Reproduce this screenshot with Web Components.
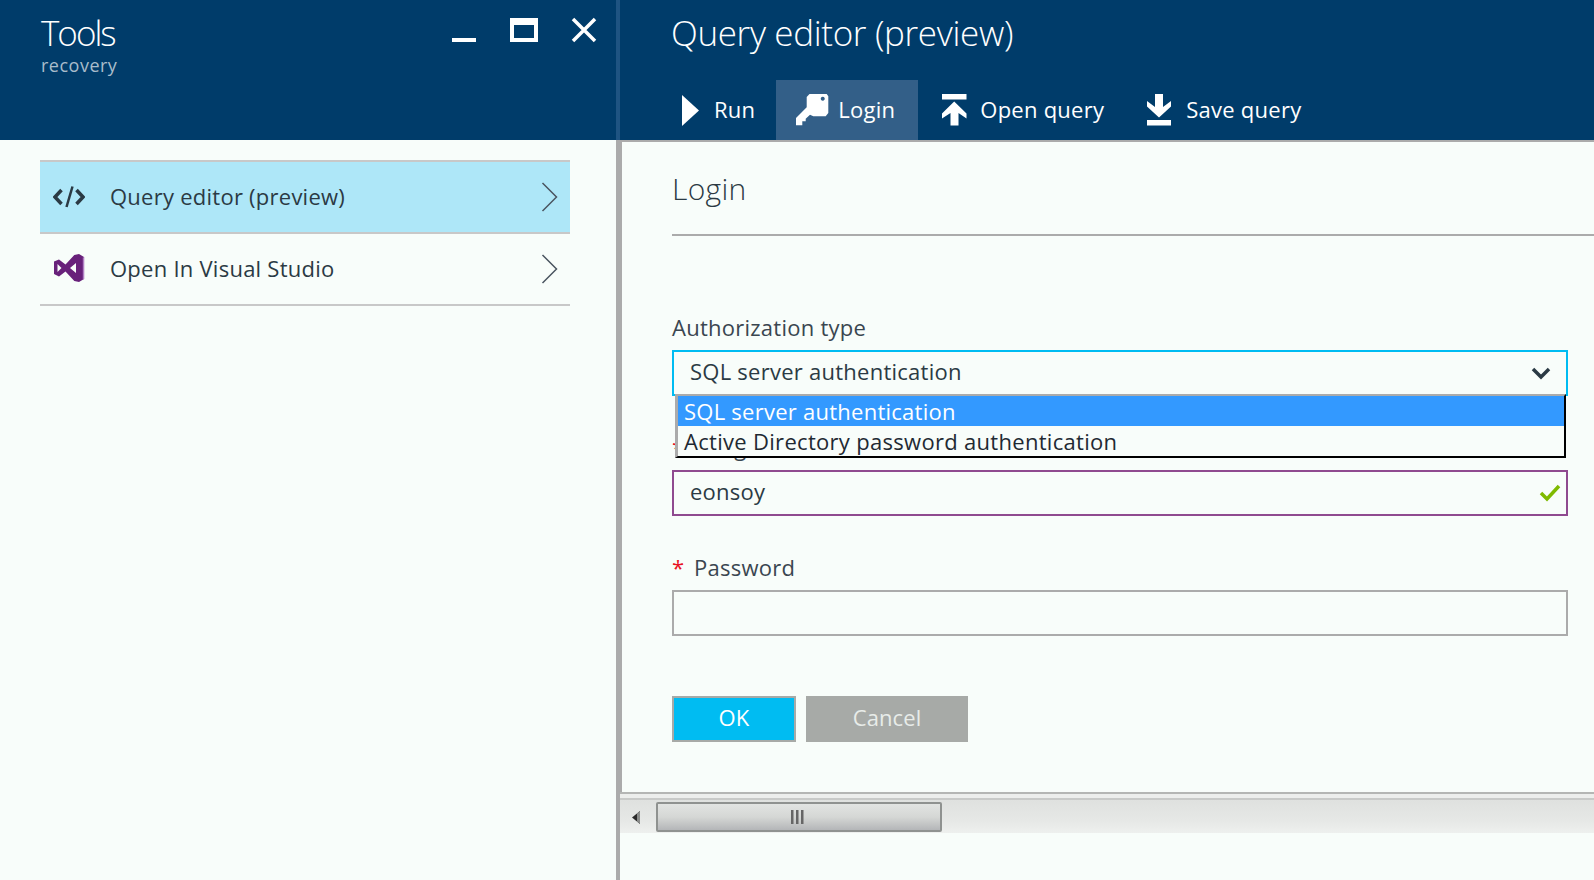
<!DOCTYPE html>
<html>
<head>
<meta charset="utf-8">
<title>Query editor</title>
<style>
  html, body { margin: 0; height: 100%; }
  body { background: #f8fdfa; font-family: "Open Sans", "Noto Sans", sans-serif; overflow: hidden; }
</style>
</head>
<body>
<portal-shell>
  <tools-blade slot="left" title-text="Tools" sub-text="recovery">
    <tool-item active label="Query editor (preview)">
      <svg slot="icon" width="32" height="24" viewBox="0 0 32 24" style="margin-top:2px"><path d="M8.500 5 2 12l6.500 7M23.500 5 30 12l-6.500 7" fill="none" stroke="#2b3a44" stroke-width="3.500"/><path d="M19.500 1.500 13.500 22" stroke="#2b3a44" stroke-width="2.500"/></svg>
    </tool-item>
    <tool-item label="Open In Visual Studio">
      <svg slot="icon" width="31" height="28" viewBox="0 0 31 28" style="margin-left:1px"><path fill="#68217a" fill-rule="evenodd" d="M20.300 1 25 0 30 3V25L25 28 20.300 27 11.500 17.500 5 22.500 0 20V7.500L5 5.500 11.500 10.500ZM3.500 10V18L7.500 14ZM22 9 16 14 22 19Z"/><path fill="#b27fc4" d="M28.800 3.500 30.300 3V25L28.800 25.500Z"/></svg>
    </tool-item>
  </tools-blade>
  <query-blade slot="right" title-text="Query editor (preview)">
    <tool-button slot="tools" label="Run" style="--gap:15px;--pad-l:15px;--pad-r:21px">
      <svg slot="icon" width="17" height="31" viewBox="0 0 17 31"><path fill="#fff" d="M0 0 17 15.500 0 31Z"/></svg>
    </tool-button>
    <tool-button slot="tools" active label="Login" style="--gap:9px;--pad-l:20px;--pad-r:23px">
      <svg slot="icon" width="33" height="32" viewBox="0 0 33 32"><path fill="#fff" fill-rule="evenodd" d="M13.500 0H30.700L32.300 2.300V19L29.700 22.300H17.300L14 20.700 9.700 24.700V27.300H6.300V31.300H0V24L10.700 13.300V3ZM26.700 2.700a2 2 0 1 0 .1 0Z"/></svg>
    </tool-button>
    <tool-button slot="tools" label="Open query" style="--gap:13px;--pad-l:24px;--pad-r:20px">
      <svg slot="icon" width="25" height="32" viewBox="0 0 25 32"><path fill="#fff" d="M0 0H24.500V5.500H0ZM12.200 7.500 24.500 19.500V24.500L16.500 19V31.500H8.500V19L0 24.500V19.500Z"/></svg>
    </tool-button>
    <tool-button slot="tools" label="Save query" style="--gap:14px;--pad-l:23px;--pad-r:20px">
      <svg slot="icon" width="25" height="32" viewBox="0 0 25 32"><path fill="#fff" d="M8 0H16V13L24 7V12.500L12 23.500 0 12.500V7L8 13ZM0 26H24V31.500H0Z"/></svg>
    </tool-button>

    <login-form></login-form>
  </query-blade>
</portal-shell>

<script>
class PortalShell extends HTMLElement {
  constructor() {
    super();
    this.attachShadow({ mode: 'open' });
    this.shadowRoot.innerHTML = `<style>
      :host { display: flex; height: 880px; width: 1594px; overflow: hidden; }
      ::slotted([slot=left]) { width: 616px; flex: none; }
      ::slotted([slot=right]) { flex: 1; min-width: 0; }
    </style>
    <slot name="left"></slot>
    <slot name="right"></slot>`;
  }
}
customElements.define('portal-shell', PortalShell);

class ToolsBlade extends HTMLElement {
  constructor() {
    super();
    this.attachShadow({ mode: 'open' });
    this.shadowRoot.innerHTML = `<style>
      :host { display: block; }
      header { height: 140px; box-sizing: border-box; background: #003c6a; color: #fff; padding: 10px 0 0 41px; position: relative; }
      h1 { margin: 0; font-size: 35px; line-height: 45px; font-weight: 300; letter-spacing: -2px; }
      p { margin: 0; font-size: 18px; line-height: 20px; color: #a9bccb; letter-spacing: .5px; }
      .ctl { position: absolute; top: 0; right: 0; display: block; }
      main { padding: 20px 46px 0 40px; display: block; }
    </style>
    <header>
      <h1></h1><p></p>
      <svg class="ctl" width="616" height="60" viewBox="0 0 616 60" aria-hidden="true">
        <path fill="#fff" d="M452 38h24v4h-24z"/>
        <path fill="#fff" fill-rule="evenodd" d="M510 18h28v24h-28zM514 25v13h20V25z"/>
        <path stroke="#fff" stroke-width="3.500" d="M573 19l22 22M595 19l-22 22"/>
      </svg>
    </header>
    <main><slot></slot></main>`;
  }
  connectedCallback() {
    this.shadowRoot.querySelector('h1').textContent = this.getAttribute('title-text');
    this.shadowRoot.querySelector('p').textContent = this.getAttribute('sub-text');
  }
}
customElements.define('tools-blade', ToolsBlade);

class ToolItem extends HTMLElement {
  constructor() {
    super();
    this.attachShadow({ mode: 'open' });
    this.shadowRoot.innerHTML = `<style>
      :host { display: flex; align-items: center; height: 70px; border-bottom: 2px solid #c8c8c8; color: #2b3a44; font-size: 22px; letter-spacing: .25px; }
      :host([active]) { background: #aee7f8; border-top: 2px solid #c8c8c8; }
      .icon { width: 70px; padding: 0 0 2px 13px; box-sizing: border-box; display: flex; flex: none; }
      .label { flex: 1; padding-bottom: 2px; }
      .chev { margin-right: 12px; display: block; }
    </style>
    <span class="icon"><slot name="icon"></slot></span>
    <span class="label"></span>
    <svg class="chev" width="17" height="30" viewBox="0 0 17 30"><path d="M1.500 1 15.500 15 1.500 29" fill="none" stroke="#4a5560" stroke-width="1.500"/></svg>`;
  }
  connectedCallback() {
    this.shadowRoot.querySelector('.label').textContent = this.getAttribute('label');
  }
}
customElements.define('tool-item', ToolItem);

class QueryBlade extends HTMLElement {
  constructor() {
    super();
    this.attachShadow({ mode: 'open' });
    this.shadowRoot.innerHTML = `<style>
      :host { display: flex; flex-direction: column; height: 880px; border-left: 4px solid #ababab; box-sizing: border-box; }
      header { height: 140px; box-sizing: border-box; background: #003c6a; color: #fff; margin-left: -4px; padding: 0 0 0 55px; display: flex; flex-direction: column; box-shadow: inset 4px 0 0 #1f5482; }
      h1 { margin: 0; height: 80px; font-size: 35px; line-height: 66px; font-weight: 300; letter-spacing: -.34px; }
      .bar { display: flex; height: 60px; margin-left: -4px; }
      main { flex: 1; min-height: 0; }
    </style>
    <header><h1></h1><div class="bar"><slot name="tools"></slot></div></header>
    <main><slot></slot></main>`;
  }
  connectedCallback() {
    this.shadowRoot.querySelector('h1').textContent = this.getAttribute('title-text');
  }
}
customElements.define('query-blade', QueryBlade);

class ToolButton extends HTMLElement {
  constructor() {
    super();
    this.attachShadow({ mode: 'open' });
    this.shadowRoot.innerHTML = `<style>
      :host { display: flex; align-items: center; gap: var(--gap); padding: 0 var(--pad-r) 0 var(--pad-l); font-size: 22px; letter-spacing: .25px; color: #fff; }
      :host([active]) { background: #335f88; }
      .icon { display: flex; }
      .label { padding-bottom: 3px; }
    </style>
    <span class="icon"><slot name="icon"></slot></span><span class="label"></span>`;
  }
  connectedCallback() {
    this.shadowRoot.querySelector('.label').textContent = this.getAttribute('label');
  }
}
customElements.define('tool-button', ToolButton);

class FormField extends HTMLElement {
  constructor() {
    super();
    this.attachShadow({ mode: 'open' });
    this.shadowRoot.innerHTML = `<style>
      :host { display: block; position: relative; color: #2b3a44; font-size: 22px; letter-spacing: .25px; }
      .lab { display: flex; height: 37px; line-height: 28px; color: #3a4650; }
      .star { color: #e81123; width: 22px; display: none; }
      :host([required]) .star { display: block; }
      .t { margin-left: var(--indent, 0); }
      .box { height: 46px; box-sizing: border-box; border: 2px solid var(--bc, #ababab); display: flex; align-items: center; justify-content: space-between; padding: 0 15px 4px 16px; }
      .val { line-height: 38px; }
      ::slotted([slot=end]) { display: block; margin-top: 3px; }
    </style>
    <div class="lab"><span class="star">*</span><span class="t"></span></div>
    <div class="box"><span class="val"></span><slot name="end"></slot></div>
    <slot name="over"></slot>`;
  }
  connectedCallback() {
    this.shadowRoot.querySelector('.t').textContent = this.getAttribute('label');
    this.shadowRoot.querySelector('.val').textContent = this.getAttribute('value') || '';
  }
}
customElements.define('form-field', FormField);

class DropList extends HTMLElement {
  constructor() {
    super();
    this.attachShadow({ mode: 'open' });
    this.shadowRoot.innerHTML = `<style>
      :host { display: block; position: absolute; z-index: 5; left: 3px; right: 2px; top: 81px; background: #f8fdfa; border-top: 2px solid #ababab; border-left: 3px solid #ababab; border-right: 2px solid #000; border-bottom: 2px solid #000; box-sizing: border-box; height: 64px; color: #1f2a33; font-size: 22px; letter-spacing: .3px; }
      div { height: 30px; line-height: 30px; padding-left: 6px; }
      .sel { background: #3399ff; color: #fff; letter-spacing: .25px; }
    </style>
    <div class="sel">SQL server authentication</div>
    <div>Active Directory password authentication</div>`;
  }
}
customElements.define('drop-list', DropList);

class LoginForm extends HTMLElement {
  constructor() {
    super();
    this.attachShadow({ mode: 'open' });
    this.shadowRoot.innerHTML = `<style>
      :host { display: block; }
      .pane { height: 652px; box-sizing: border-box; padding: 0 26px 0 50px; border-top: 2px solid #ababab; border-left: 2px solid #ababab; }
      h2 { margin: 0 -26px 0 0; height: 94px; box-sizing: border-box; padding-top: 25px; font-size: 30px; line-height: 44px; font-weight: 300; letter-spacing: .3px; color: #2b3a44; border-bottom: 2px solid #ababab; }
      .f1 { margin-top: 77px; position: relative; z-index: 2; --bc: #00bcf2; }
      .f2 { margin-top: 37px; --bc: #8f4a8f; --indent: 15px; }
      .f3 { margin-top: 37px; }
      .btns { display: flex; gap: 10px; margin-top: 60px; font-size: 22px; letter-spacing: .1px; }
      button { font: inherit; letter-spacing: inherit; height: 46px; box-sizing: border-box; color: #fff; border: 2px solid #a7aaa7; padding: 0 0 4px; }
      .ok { width: 124px; background: #00bcf2; }
      .cancel { width: 162px; background: #a7aaa7; color: #e8ece9; }
    </style>
    <div class="pane">
      <h2>Login</h2>
      <form-field class="f1" label="Authorization type" value="SQL server authentication">
        <svg slot="end" width="20" height="14" viewBox="0 0 20 14"><path d="M2 3l8 8 8-8" fill="none" stroke="#2b3a44" stroke-width="3.500"/></svg>
        <drop-list slot="over"></drop-list>
      </form-field>
      <form-field class="f2" required label="Login" value="eonsoy">
        <svg slot="end" width="22" height="18" viewBox="0 0 22 18" style="margin-right:-10px"><path d="M2 9l6 6L20 2" fill="none" stroke="#7fba00" stroke-width="3.500"/></svg>
      </form-field>
      <form-field class="f3" required label="Password"></form-field>
      <div class="btns"><button class="ok">OK</button><button class="cancel">Cancel</button></div>
    </div>
    <h-scroll></h-scroll>`;
  }
}
customElements.define('login-form', LoginForm);

class HScroll extends HTMLElement {
  constructor() {
    super();
    this.attachShadow({ mode: 'open' });
    this.shadowRoot.innerHTML = `<style>
      :host { display: flex; align-items: center; height: 41px; box-sizing: border-box; padding-top: 9px; background: linear-gradient(#b4b6b4 0 2px, #eceeec 2px 6px, #c8cac8 6px 8px, #dfe1df 8px, #e6e8e6 70%, #eef0ee 100%); }
      .arrow { width: 36px; flex: none; display: flex; justify-content: center; padding-right: 5px; box-sizing: border-box; }
      .thumb { width: 286px; height: 30px; box-sizing: border-box; border: 2px solid #8f9290; border-radius: 2px; background: linear-gradient(#e2e4e2, #d5d7d5 50%, #b4b6b8); display: flex; align-items: center; justify-content: center; padding-right: 4px; }
    </style>
    <span class="arrow"><svg width="8" height="13" viewBox="0 0 8 13"><path d="M8 0 0 6.500 8 13z" fill="#2a2a2a"/><path d="M5 2.500 8 0v13l-3-2.500z" fill="#8a8c8a"/></svg></span>
    <div class="thumb"><svg width="16" height="14" viewBox="0 0 16 14"><path d="M2 0h2.500v14H2zM7 0h2.500v14H7zM12 0h2.500v14H12z" fill="#666"/></svg></div>`;
  }
}
customElements.define('h-scroll', HScroll);
</script>
</body>
</html>
